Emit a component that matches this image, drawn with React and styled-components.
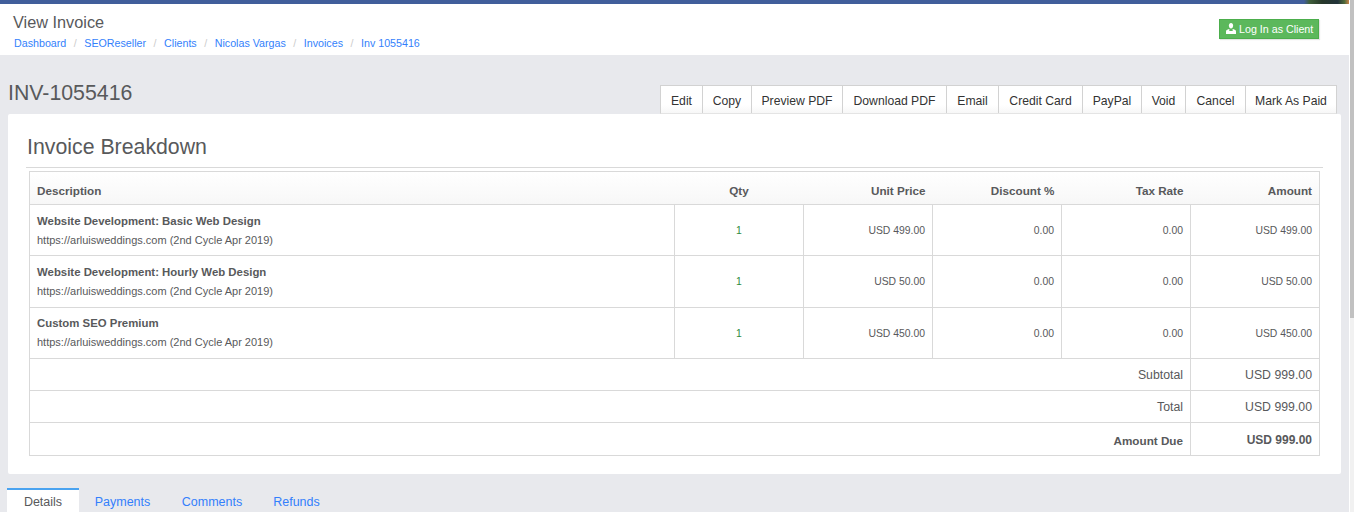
import styled, { createGlobalStyle } from 'styled-components';

const GlobalStyle = createGlobalStyle`
    html, body {
        margin: 0;
        height: 512px;
        overflow: hidden;
    }
    body {
        background-color: #e8e9ed;
        color: #58595b;
        font-family: "Liberation Sans", Arial, sans-serif;
        font-size: 12px;
    }
`;

const Page = styled.div`
    display: flex;
    height: 512px;
    overflow: hidden;
`;

const Main = styled.div`
    flex: 1;
    min-width: 0;
`;

const Scrollbar = styled.div`
    background-color: #f1f1f1;
    border-left: 1px solid #fff;
    box-sizing: border-box;
    width: 5px;
`;

const ScrollThumb = styled.div`
    background-color: #c1c1c1;
    height: 318px;
`;

const TopStrip = styled.div`
    background-color: #415e9b;
    display: flex;
    height: 4px;
    justify-content: flex-end;
`;

const StripPhoto = styled.div`
    background: linear-gradient(90deg, #415e9b, #3f5f3a 12%, #27382a 40%, #22333a 75%, #4f6a3a 90%, #c9824a);
    width: 45px;
`;

const Header = styled.header`
    align-items: flex-start;
    background-color: #fff;
    display: flex;
    height: 51px;
    justify-content: space-between;
`;

const HeaderTitle = styled.h2`
    color: #58595b;
    font-size: 16.3px;
    font-weight: 400;
    line-height: 18px;
    margin: 9px 0 0 13px;
`;

const Breadcrumbs = styled.nav`
    display: flex;
    font-size: 10.7px;
    line-height: 14px;
    margin: 5px 0 0 14px;
`;

const Crumb = styled.a`
    color: #337ffc;
    &:not(:last-child)::after {
        color: #ccc;
        content: '/';
        padding: 0 7.5px;
    }
`;

const LoginButton = styled.a`
    align-items: center;
    background-color: #5cb85c;
    border: 1px solid #4cae4c;
    box-shadow: 1px 1px 1px #e4e4e4;
    box-sizing: border-box;
    color: #fff;
    display: flex;
    font-size: 10.7px;
    gap: 3px;
    height: 20px;
    margin: 15px 30px 0 0;
    padding: 0 4px 1px 6px;
    white-space: nowrap;
    width: 100px;
`;

const ClientSvg = styled.svg`
    flex-shrink: 0;
    height: 11px;
    width: 10px;
`;

const Content = styled.div`
    padding: 0 8px;
`;

const TitleRow = styled.div`
    align-items: flex-end;
    display: flex;
    height: 59px;
    justify-content: space-between;
`;

const InvoiceNumber = styled.h1`
    color: #58595b;
    font-size: 21.3px;
    font-weight: 400;
    line-height: 24px;
    margin: 0 0 9px;
`;

const Actions = styled.div`
    background-color: #fff;
    border: 1px solid #d2d2d2;
    border-bottom-color: #e4e4e4;
    box-sizing: border-box;
    display: flex;
    height: 29px;
    margin-right: 4px;
`;

const Action = styled.a`
    align-items: center;
    background: linear-gradient(#fff 70%, #f7f7f7);
    box-sizing: border-box;
    color: #333;
    display: flex;
    font-size: 12.2px;
    justify-content: center;
    padding-top: 2px;
    width: ${(p) => p.$width}px;
    &:not(:last-child) {
        border-right: 1px solid #d2d2d2;
    }
`;

const Panel = styled.section`
    background-color: #fff;
    border-radius: 2px;
    box-sizing: border-box;
    height: 360px;
    padding: 18px 18px 0;
`;

const PanelTitle = styled.h3`
    border-bottom: 1px solid #d9d9d9;
    color: #58595b;
    font-size: 21.3px;
    font-weight: 400;
    height: 35px;
    line-height: 31px;
    margin: 0 0 3px;
    padding-left: 1px;
`;

const Table = styled.table`
    border: 1px solid #d9d9d9;
    border-collapse: collapse;
    margin-left: 3px;
    table-layout: fixed;
    width: 1291px;
`;

const HeadRow = styled.tr`
    background: linear-gradient(#fff, #f7f7f7);
`;

const Th = styled.th`
    border-bottom: 1px solid #d9d9d9;
    color: #58595b;
    font-size: 11.7px;
    font-weight: 700;
    height: 28px;
    padding: 4px 7px 0;
    text-align: ${(p) => p.$align || 'right'};
`;

const Td = styled.td`
    border: 1px solid #d9d9d9;
    color: #58595b;
    font-size: 10.4px;
    padding: 0 7px;
    text-align: ${(p) => p.$align || 'right'};
`;

const ItemCell = styled(Td)`
    height: ${(p) => p.$height - p.$top}px;
    padding-top: ${(p) => p.$top}px;
    vertical-align: top;
`;

const QtyCell = styled(Td)`
    color: #2e8b3d;
`;

const ItemName = styled.div`
    font-size: 11.4px;
    font-weight: 700;
    line-height: 14px;
    margin-bottom: 6px;
`;

const ItemMeta = styled.div`
    color: #58595b;
    font-size: 11px;
    line-height: 13px;
`;

const TotalCell = styled.td`
    border: 1px solid #d9d9d9;
    color: #58595b;
    font-size: ${(p) => (p.$strong ? 12 : 12.3)}px;
    font-weight: ${(p) => (p.$strong ? 700 : 400)};
    height: ${(p) => (p.$strong ? 30 : 31)}px;
    padding: ${(p) => (p.$strong ? 2 : 0)}px 7px 0;
    text-align: right;
`;

const DueLabel = styled(TotalCell)`
    font-size: 11.7px;
`;

const Tabs = styled.div`
    display: flex;
    margin: 14px 0 0 -1px;
`;

const Tab = styled.a`
    background-color: ${(p) => (p.$active ? '#fff' : 'transparent')};
    border-top: 2px solid ${(p) => (p.$active ? '#4aa3f0' : 'transparent')};
    box-sizing: border-box;
    color: ${(p) => (p.$active ? '#58595b' : '#337ffc')};
    font-size: 12.5px;
    height: 24px;
    line-height: 25px;
    text-align: center;
    width: ${(p) => p.$width}px;
`;

const actions = [
    { label: 'Edit', width: 42 },
    { label: 'Copy', width: 49 },
    { label: 'Preview PDF', width: 91 },
    { label: 'Download PDF', width: 104 },
    { label: 'Email', width: 52 },
    { label: 'Credit Card', width: 84 },
    { label: 'PayPal', width: 59 },
    { label: 'Void', width: 44 },
    { label: 'Cancel', width: 60 },
    { label: 'Mark As Paid', width: 90 },
];
const crumbs = ['Dashboard', 'SEOReseller', 'Clients', 'Nicolas Vargas', 'Invoices', 'Inv 1055416'];
const items = [
    { name: 'Website Development: Basic Web Design', price: 'USD 499.00', height: 50, top: 9 },
    { name: 'Website Development: Hourly Web Design', price: 'USD 50.00', height: 51, top: 9 },
    { name: 'Custom SEO Premium', price: 'USD 450.00', height: 50, top: 8 },
];

const ClientIcon = () => (
    <ClientSvg viewBox="0 0 10 11" fill="#fff">
        <path d="M5 0C3.7 0 2.9 1 2.9 2.4 2.9 4 3.8 5.5 5 5.5S7.1 4 7.1 2.4C7.1 1 6.3 0 5 0Z" />
        <path d="M0 11V8.4C0 7.3 1.2 6.6 3 6.1L3.8 7 2.8 8H7.2L6.2 7 7 6.1C8.8 6.6 10 7.3 10 8.4V11Z" />
    </ClientSvg>
);

export default function App() {
    return (
        <Page>
            <GlobalStyle />
            <Main>
                <TopStrip><StripPhoto /></TopStrip>
                <Header>
                    <div>
                        <HeaderTitle>View Invoice</HeaderTitle>
                        <Breadcrumbs>
                            {crumbs.map((c) => <Crumb key={c}>{c}</Crumb>)}
                        </Breadcrumbs>
                    </div>
                    <LoginButton><ClientIcon />Log In as Client</LoginButton>
                </Header>
                <Content>
                    <TitleRow>
                        <InvoiceNumber>INV-1055416</InvoiceNumber>
                        <Actions>
                            {actions.map((a) => <Action key={a.label} $width={a.width}>{a.label}</Action>)}
                        </Actions>
                    </TitleRow>
                    <Panel>
                        <PanelTitle>Invoice Breakdown</PanelTitle>
                        <Table>
                            <colgroup>
                                <col />
                                <col width="129" />
                                <col width="129" />
                                <col width="129" />
                                <col width="129" />
                                <col width="129" />
                            </colgroup>
                            <thead>
                                <HeadRow>
                                    <Th $align="left">Description</Th>
                                    <Th $align="center">Qty</Th>
                                    <Th>Unit Price</Th>
                                    <Th>Discount %</Th>
                                    <Th>Tax Rate</Th>
                                    <Th>Amount</Th>
                                </HeadRow>
                            </thead>
                            <tbody>
                                {items.map((item) => (
                                    <tr key={item.name}>
                                        <ItemCell $align="left" $height={item.height} $top={item.top}>
                                            <ItemName>{item.name}</ItemName>
                                            <ItemMeta>https://arluisweddings.com (2nd Cycle Apr 2019)</ItemMeta>
                                        </ItemCell>
                                        <QtyCell $align="center">1</QtyCell>
                                        <Td>{item.price}</Td>
                                        <Td>0.00</Td>
                                        <Td>0.00</Td>
                                        <Td>{item.price}</Td>
                                    </tr>
                                ))}
                                <tr>
                                    <TotalCell colSpan="5">Subtotal</TotalCell>
                                    <TotalCell>USD 999.00</TotalCell>
                                </tr>
                                <tr>
                                    <TotalCell colSpan="5">Total</TotalCell>
                                    <TotalCell>USD 999.00</TotalCell>
                                </tr>
                                <tr>
                                    <DueLabel colSpan="5" $strong>Amount Due</DueLabel>
                                    <TotalCell $strong>USD 999.00</TotalCell>
                                </tr>
                            </tbody>
                        </Table>
                    </Panel>
                    <Tabs>
                        <Tab $active $width={72}>Details</Tab>
                        <Tab $width={87}>Payments</Tab>
                        <Tab $width={92}>Comments</Tab>
                        <Tab $width={77}>Refunds</Tab>
                    </Tabs>
                </Content>
            </Main>
            <Scrollbar><ScrollThumb /></Scrollbar>
        </Page>
    );
}
